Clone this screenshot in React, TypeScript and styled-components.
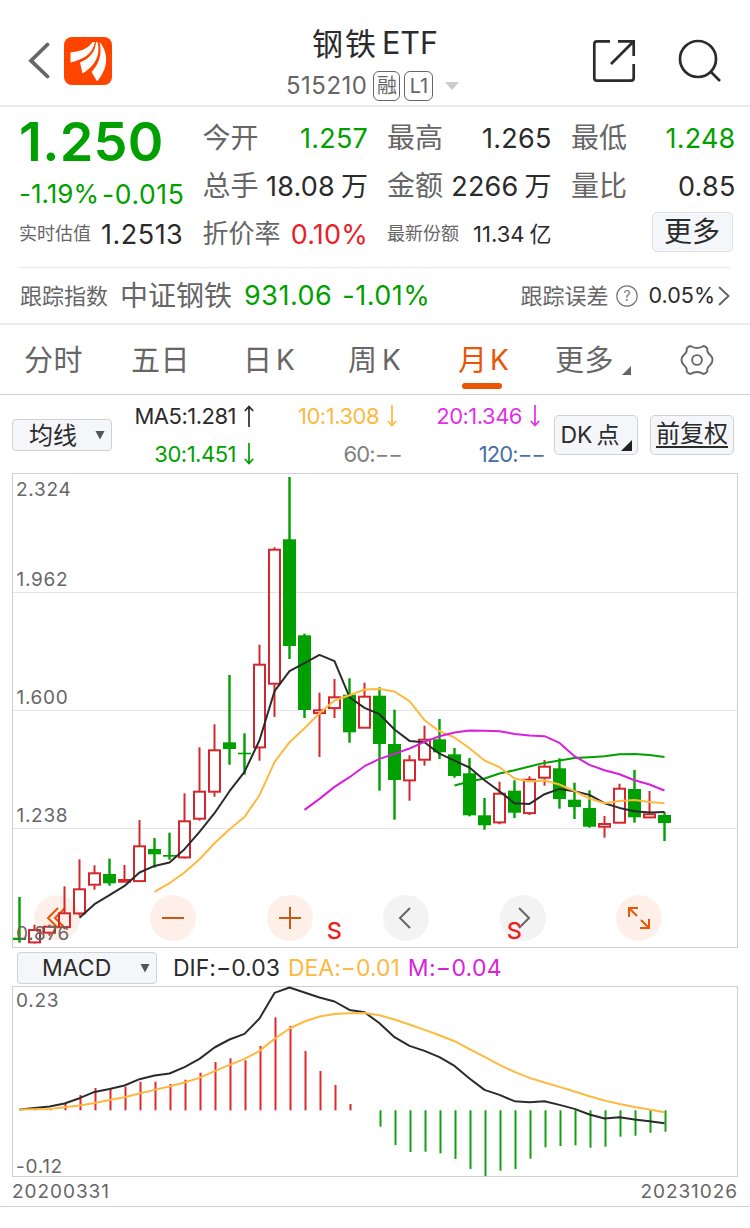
import React from "react";
import styled, { createGlobalStyle } from "styled-components";

const GREEN = "#00a000";
const RED = "#e8202a";
const INK = "#2b2b2b";
const GRAY = "#666";
const GOLD = "#fdb940";
const MAGENTA = "#d81fdc";
const ORANGE = "#ea5504";

const Global = createGlobalStyle`
  * { box-sizing: border-box; }
  body { margin: 0; background: #fff; }
  svg { display: block; flex: none; }
`;

const Page = styled.div`
  width: 750px;
  height: 1228px;
  background: #fff;
  overflow: hidden;
  font-family: Inter, "Noto Sans CJK SC", sans-serif;
  font-feature-settings: "calt" 0;
  font-weight: 400;
  color: ${INK};
`;

interface TextProps { $size: number; $color?: string; $ls?: number; $ml?: number; $weight?: number }
const Text = styled.span<TextProps>`
  display: inline-block;
  flex: none;
  white-space: pre;
  line-height: 1;
  font-size: ${(p) => p.$size}px;
  color: ${(p) => p.$color ?? INK};
  letter-spacing: ${(p) => p.$ls ?? 0}px;
  margin-left: ${(p) => p.$ml ?? 0}px;
  font-weight: ${(p) => p.$weight ?? 400};
`;

const Header = styled.header`
  display: flex;
  height: 107px;
  border-bottom: 2px solid #ebebeb;
  padding: 24px 27px 0 28px;
`;
const HeaderSide = styled.div<{ $w: number; $end?: boolean }>`
  display: flex;
  width: ${(p) => p.$w}px;
  height: 74px;
  align-items: center;
  gap: ${(p) => (p.$end ? 40 : 14)}px;
  justify-content: ${(p) => (p.$end ? "flex-end" : "flex-start")};
`;
const TitleBlock = styled.div`
  flex: 1;
`;
const TitleRow = styled.div`
  display: flex;
  height: 39px;
  align-items: center;
  padding-left: 106px;
`;
const CodeRow = styled.div`
  display: flex;
  height: 46px;
  align-items: center;
  padding-left: 80px;
`;
const Badge = styled.span<{ $ml: number; $w: number }>`
  display: flex;
  align-items: center;
  justify-content: center;
  flex: none;
  width: ${(p) => p.$w}px;
  height: 30px;
  margin-left: ${(p) => p.$ml}px;
  border: 1px solid ${GRAY};
  border-radius: 6px;
  line-height: 1;
  color: ${GRAY};
  font-size: 20px;
`;

const Quote = styled.section`
  display: flex;
  height: 161px;
  padding: 7px 14px 0 19px;
`;
const PriceColumn = styled.div`
  width: 183.5px;
`;
const PriceRow = styled.div<{ $h: number }>`
  display: flex;
  align-items: center;
  height: ${(p) => p.$h}px;
`;
const StatColumn = styled.div<{ $w: number; $gap: number }>`
  width: ${(p) => p.$w}px;
  margin-right: ${(p) => p.$gap}px;
`;
const StatRow = styled.div`
  display: flex;
  align-items: center;
  justify-content: space-between;
  height: 48px;
`;
const Pair = styled.span`
  display: flex;
  align-items: center;
`;
const MoreButton = styled.button`
  display: flex;
  align-items: center;
  justify-content: center;
  width: 81px;
  height: 40px;
  margin: -4px 3px 0 auto;
  padding: 0;
  border: 1.5px solid #dfe1e5;
  border-radius: 5px;
  background: #f5f6fa;
  font-family: inherit;
`;

const Tracking = styled.section`
  display: flex;
  align-items: center;
  height: 56px;
  margin: -1px 20px 0;
  border-top: 1px solid #e8e8e8;
`;
const Spacer = styled.span`
  flex: 1;
`;

const Tabs = styled.nav`
  display: flex;
  height: 72px;
  border-top: 2px solid #ebebeb;
  border-bottom: 1px solid #d0d0d0;
  padding: 0 0 0 24px;
`;
const Tab = styled.div<{ $w: number }>`
  width: ${(p) => p.$w}px;
  display: flex;
  flex-direction: column;
  padding-top: 19px;
`;
const TabLine = styled.span`
  display: flex;
  align-items: center;
  height: 32px;
`;
const Underline = styled.span`
  width: 40px;
  height: 6px;
  border-radius: 3px;
  margin: 7px 0 0 4px;
  background: ${ORANGE};
`;
const CornerMark = styled.svg<{ $ml: number; $mt: number }>`
  margin-left: ${(p) => p.$ml}px;
  margin-top: ${(p) => p.$mt}px;
`;

const Averages = styled.section`
  display: flex;
  height: 78px;
  padding: 0 16px 0 12px;
`;
const SelectBox = styled.div<{ $w: number; $pad: number }>`
  display: flex;
  align-items: center;
  justify-content: space-between;
  flex: none;
  width: ${(p) => p.$w}px;
  height: 32px;
  padding: 0 6px 0 ${(p) => p.$pad}px;
  border: 1px solid #cfd1d4;
  border-radius: 4px;
  background: #f5f6f9;
`;
const AverageSelect = styled(SelectBox)`
  margin-top: 24px;
  padding-top: 1px;
`;
const AverageGrid = styled.div`
  display: grid;
  grid-template-columns: 147px 143px 143px;
  grid-template-rows: 38px 38px;
  width: 433px;
  align-items: center;
  justify-items: end;
  padding-top: 2px;
`;
const AverageCell = styled.span`
  display: flex;
  align-items: center;
`;
const ArrowIcon = styled.svg`
  margin: 0 5px 0 8px;
`;
const ChipButton = styled.div<{ $ml: number }>`
  display: flex;
  align-items: center;
  justify-content: center;
  flex: none;
  width: 84px;
  height: 40px;
  margin: 20px 0 0 ${(p) => p.$ml}px;
  border: 1px solid #cfd1d4;
  border-radius: 5px;
  background: #f5f6f9;
`;
const Underlined = styled.span`
  border-bottom: 2px solid ${INK};
  height: 26px;
  display: flex;
  align-items: flex-end;
`;

const ChartBox = styled.div<{ $h: number }>`
  position: relative;
  width: 726px;
  height: ${(p) => p.$h}px;
  margin-left: 12px;
  border: 1px solid #d0d0d0;
`;
const Plot = styled.svg`
  position: absolute;
  left: -1px;
  top: -1px;
`;
const ChartNav = styled.div`
  position: absolute;
  left: 21px;
  right: 75px;
  bottom: 6px;
  display: flex;
  justify-content: space-between;
`;
const RoundButton = styled.span<{ $muted?: boolean }>`
  display: flex;
  width: 46px;
  height: 46px;
  border-radius: 50%;
  background: ${(p) => (p.$muted ? "#f3f3f3" : "#fef0e9")};
`;
const IndicatorBar = styled.div`
  display: flex;
  align-items: center;
  height: 38px;
  padding: 2px 0 0 17px;
`;
const Dates = styled.div`
  display: flex;
  justify-content: space-between;
  align-items: center;
  height: 30px;
  padding: 0 12px 1px;
  border-bottom: 1px solid #d0d0d0;
`;

/* [direction, high, body top, body bottom, low] in chart pixels */
type Candle = [0 | 1, number, number, number, number];
const candles: Candle[] = [
  [0, 897, 937.7, 940, 942.7], [1, 924.7, 929, 943, 943.5], [1, 924.7, 925.7, 933.3, 935.7], [1, 886.3, 912.3, 927.7, 929.3],
  [1, 859.3, 888.3, 914, 915.7], [1, 865.3, 872.3, 885.3, 889.7], [0, 858.7, 874, 883.3, 885.7], [1, 865, 879, 882.3, 882.3],
  [1, 820, 845.3, 881.7, 881.7], [0, 838, 849, 854.3, 867.7], [0, 832.7, 855, 856.7, 859.7], [1, 793.3, 820.3, 858, 858.5],
  [1, 747.3, 790.7, 819.3, 820.7], [1, 724.3, 749.3, 792.3, 796.7], [0, 675, 742.3, 749, 764.7], [0, 733.3, 752.7, 754.3, 774.7],
  [1, 644.7, 663.7, 748, 760.7], [1, 547.3, 548.7, 684.3, 717], [0, 477, 539.3, 646, 659], [0, 633.7, 635.3, 710, 718],
  [1, 692.7, 709.3, 713.7, 757], [1, 679, 696.3, 708.7, 718], [0, 678.3, 694.7, 732.3, 742.7], [1, 682.7, 695.7, 728.3, 728.3],
  [0, 687.3, 695.7, 744, 790.7], [0, 709.7, 744, 780, 819.7], [1, 755.3, 759.3, 781, 800.7], [1, 725.7, 738.7, 760.3, 765.7],
  [0, 719, 739.3, 752.3, 759], [0, 748, 754.3, 776, 777.7], [0, 758, 773.3, 815.3, 816.3], [0, 798, 815.3, 825.3, 829.7],
  [1, 781.7, 792.7, 823, 824.3], [0, 780.3, 790.7, 812.7, 818], [1, 776.3, 778.7, 813.7, 815], [1, 760, 765.7, 778.3, 785.7],
  [0, 758.3, 768.3, 799, 808.7], [0, 782.7, 799.7, 807, 819], [0, 790.3, 808, 826.7, 827.7], [1, 816, 823, 827.3, 837.7],
  [1, 783.7, 787.7, 823.3, 823.3], [0, 770, 789, 817.3, 822.7], [1, 791, 813.3, 818, 818], [0, 812, 815, 823, 841],
];
const ma5 = [917.5, 904, 895, 885.7, 872.3, 865.7, 862.3, 849, 831.7, 813, 791, 771.7, 740, 691, 671, 663, 654.7, 661, 697, 707.7, 714, 729.3, 740.7, 742, 753.5, 760.5, 767.3, 780, 791, 803, 803.7, 794, 788.7, 791, 794.7, 803, 807.7, 811, 812.3, 811.7];
const ma10 = [891.7, 883, 872.3, 859, 843, 829, 816.7, 795, 762, 742, 728, 713, 700.3, 695, 689.3, 688.7, 691.3, 701, 720, 731, 737.3, 748, 760.3, 767, 778.3, 781.3, 780.3, 784.3, 791, 798.3, 803, 800.7, 799.7, 801.7, 803];
const ma20 = [809.7, 798.7, 786.7, 777, 766, 758.7, 753.7, 748.3, 741.7, 736, 732.3, 730.3, 730.5, 731, 733.7, 735.3, 736, 742.7, 756, 764.7, 770, 774, 780, 784.3, 790.3];
const ma30 = [785.3, 781.3, 778.3, 773.3, 770, 766.3, 762.7, 760.3, 757.7, 757, 756, 754, 753.7, 754.7, 756.7];
const bars: (number | null)[] = [null, 1109, 1108.5, 1103.7, 1095, 1088, 1088, 1086.7, 1081.7, 1081.7, 1084, 1079.7, 1072.7, 1062, 1058.3, 1060.3, 1046, 1017.3, 1026, 1051, 1071, 1085, 1104, null, 1126.7, 1145, 1152, 1151.7, 1153.3, 1159, 1169, 1176, 1170.7, 1169, 1158.7, 1147.3, 1146, 1145.3, 1147.7, 1146.7, 1136.7, 1135.7, 1132.7, 1131.7];
const dif = [1109.3, 1107.7, 1106.3, 1103.3, 1098, 1091.7, 1088.7, 1085.3, 1079, 1075.3, 1073.3, 1067, 1058.7, 1047.3, 1039.3, 1033.7, 1018.3, 992.7, 987.3, 992.3, 997.3, 1001.3, 1009.7, 1012, 1023, 1037, 1045.7, 1050.7, 1057, 1065.7, 1078.3, 1089.7, 1094.7, 1101, 1102, 1101, 1104.7, 1108.7, 1114.3, 1118.3, 1117, 1119.3, 1121, 1123];
const dea = [1109.3, 1109, 1108.7, 1107, 1105.3, 1102.7, 1099.7, 1097, 1093.3, 1089.7, 1086.3, 1082.3, 1077.7, 1071, 1064.7, 1058.7, 1050.7, 1038.7, 1028.3, 1021.3, 1016.3, 1013.7, 1013, 1012.7, 1015, 1019.3, 1024.3, 1029.7, 1035, 1041, 1049, 1056.7, 1064.7, 1071.7, 1077.7, 1082.3, 1086.7, 1091.3, 1096, 1100.3, 1103.7, 1106.7, 1109.3, 1112];

const cx = (i: number) => 19.5 + 15 * i;

function Line({ data, start = 0, color }: { data: number[]; start?: number; color: string }) {
  return <polyline fill="none" stroke={color} strokeWidth={2} strokeLinejoin="round" points={data.map((y, i) => `${cx(i + start)},${y + 0.2}`).join(" ")} />;
}

function CandleMark({ c, x }: { c: Candle; x: number }) {
  const [up, high, top, bottom, low] = c;
  if (!up) {
    return (
      <g fill={GREEN}>
        <rect x={x - 1.2} y={high} width={2.4} height={low - high} />
        <rect x={x - 6.5} y={top} width={13} height={bottom - top} />
      </g>
    );
  }
  return (
    <g stroke="#d2282d" strokeWidth={2} fill="none">
      <line x1={x} x2={x} y1={high} y2={top + 1} />
      <line x1={x} x2={x} y1={bottom} y2={Math.max(low, bottom)} />
      <rect x={x - 5.5} y={top + 1} width={11} height={Math.max(1.5, bottom - top - 1.6)} />
    </g>
  );
}

const AxisText = styled.text`
  font-family: Inter, sans-serif;
  font-size: 19px;
  letter-spacing: 0.7px;
  fill: ${GRAY};
`;
const SignalText = styled.text`
  font-family: Inter, sans-serif;
  font-size: 23.5px;
  font-weight: 500;
  fill: #f0201c;
`;

function PricePlot() {
  return (
    <Plot width={726} height={475} viewBox="12 473 726 475">
      {[592.5, 710.5, 828.5].map((y) => <line key={y} x1={13} x2={737} y1={y} y2={y} stroke="#e4e5ec" />)}
      {candles.map((c, i) => <CandleMark key={i} c={c} x={cx(i)} />)}
      <Line data={ma30} start={29} color={GREEN} />
      <Line data={ma5} start={4} color={INK} />
      <Line data={ma10} start={9} color={GOLD} />
      <Line data={ma20} start={19} color={MAGENTA} />
      <AxisText x={16} y={496}>2.324</AxisText>
      <AxisText x={16.5} y={586}>1.962</AxisText>
      <AxisText x={16.5} y={704}>1.600</AxisText>
      <AxisText x={16.5} y={822}>1.238</AxisText>
      <AxisText x={16} y={940}>0.876</AxisText>
      <SignalText x={326.8} y={939}>S</SignalText>
      <SignalText x={506.8} y={939}>S</SignalText>
    </Plot>
  );
}

function MacdPlot() {
  return (
    <Plot width={726} height={191} viewBox="12 986 726 191">
      {bars.map((y, i) => y === null ? null : (
        <rect key={i} x={cx(i)} width={2} y={Math.min(y, 1110.3)} height={Math.abs(y - 1110.3)} fill={y < 1110 ? "#e0282d" : "#14a014"} />
      ))}
      <Line data={dif} color={INK} />
      <Line data={dea} color={GOLD} />
      <AxisText x={16} y={1007}>0.23</AxisText>
      <AxisText x={16} y={1173}>-0.12</AxisText>
    </Plot>
  );
}

const navIcons: { muted?: boolean; color: string; d: string }[] = [
  { color: ORANGE, d: "M24 13 14 23 24 33M31 13 21 23 31 33" },
  { color: "#c65a14", d: "M12 23H34" },
  { color: "#c65a14", d: "M12 23H34M23 12V34" },
  { muted: true, color: GRAY, d: "M27 13 17 23 27 33" },
  { muted: true, color: GRAY, d: "M19 13 29 23 19 33" },
  { color: ORANGE, d: "M13 22V13H22M13 13 21 21M25 25 33 33M24 33H33V24" },
];

function Stat({ label, value, color, labelSize = 28, unit }: { label: string; value: string; color?: string; labelSize?: number; unit?: string }) {
  return (
    <StatRow>
      <Text $size={labelSize} $color={GRAY}>{label}</Text>
      <Pair>
        <Text $size={27} $color={color} $ls={0.2}>{value}</Text>
        {unit && <Text $size={27} $ml={6}>{unit}</Text>}
      </Pair>
    </StatRow>
  );
}

function Caret() {
  return <svg width="10" height="9" viewBox="0 0 10 9"><path d="M.5 0H9.500L5 8.500Z" fill="#555" /></svg>;
}

function Average({ label, color, up }: { label: string; color: string; up?: boolean }) {
  return (
    <AverageCell>
      <Text $size={22} $ls={-0.5} $weight={370} $color={color}>{label}</Text>
      <ArrowIcon width="10" height="22" viewBox="0 0 10 22" fill="none" stroke={color} strokeWidth="1.7">
        <path d={up ? "M5 22V1.500M.8 6 5 1.500 9.200 6" : "M5 0V20.500M.8 16 5 20.500 9.200 16"} />
      </ArrowIcon>
    </AverageCell>
  );
}

const HelpIcon = styled.svg`
  margin-left: 7px;
`;
const Chevron = styled.svg`
  margin-left: 3px;
`;
const CodeCaret = styled.svg`
  margin-left: 12px;
`;

export default function App() {
  return (
    <Page>
      <Global />
      <Header>
        <HeaderSide $w={178}>
          <svg width="22" height="38" viewBox="28 42 22 38"><path d="M47.5 44.5 31 60.7 47.5 76.5" fill="none" stroke="#666" strokeWidth="3.8" strokeLinecap="round" /></svg>
          <svg width="48" height="48" viewBox="0 0 48 48">
            <rect width="48" height="48" rx="8" fill="#ff4400" />
            <path fill="#fff" d="M28.500 5C23 13 15 14.500 6.500 15.500V25.500C19 22.500 28 18 31 5ZM32 5C31.500 14 26 21.500 16 25.500L18.500 36.500C31 29 37 18 33.500 5ZM35.500 5C38.500 17 35 27 27.500 35L33 44.300C42 35 47 18 35.500 5Z" />
          </svg>
        </HeaderSide>
        <TitleBlock>
          <TitleRow>
            <Text $size={31} $ls={2}>钢铁</Text>
            <Text $size={30.5} $ml={4}>ETF</Text>
          </TitleRow>
          <CodeRow>
            <Text $size={24} $color={GRAY} $ls={0.5}>515210</Text>
            <Badge $ml={6} $w={27}>融</Badge>
            <Badge $ml={4} $w={29}>L1</Badge>
            <CodeCaret width="14" height="8" viewBox="0 0 14 8"><path d="M0 0H14L7 8Z" fill="#ccc" /></CodeCaret>
          </CodeRow>
        </TitleBlock>
        <HeaderSide $w={131} $end>
          <svg width="46" height="46" viewBox="590 38 46 46" fill="none" stroke="#2b2b2b" strokeWidth="2.7">
            <path d="M609 41.300H596Q593.300 41.300 593.300 44V78Q593.300 80.700 596 80.700H630Q632.700 80.700 632.700 78V64M617 41.300H632.700V56M632 42 610 64" />
          </svg>
          <svg width="46" height="46" viewBox="676 38 46 46" fill="none" stroke="#2b2b2b" strokeWidth="2.700">
            <circle cx="697" cy="59" r="18" /><path d="M709.500 71.500 719 81" />
          </svg>
        </HeaderSide>
      </Header>

      <Quote>
        <PriceColumn>
          <PriceRow $h={56}><Text $size={54} $color={GREEN} $weight={600} $ls={0.3}>1.250</Text></PriceRow>
          <PriceRow $h={48}>
            <Text $size={26} $color={GREEN}>-1.19%</Text>
            <Text $size={26.5} $ls={0.6} $color={GREEN} $ml={3}>-0.015</Text>
          </PriceRow>
          <PriceRow $h={32}>
            <Text $size={18} $color={GRAY}>实时估值</Text>
            <Text $size={27} $ls={0.5} $ml={10}>1.2513</Text>
          </PriceRow>
        </PriceColumn>
        <StatColumn $w={165.5} $gap={19}>
          <Stat label="今开" value="1.257" color={GREEN} />
          <Stat label="总手" value="18.08" unit="万" />
          <Stat label="折价率" value="0.10%" color={RED} labelSize={26} />
        </StatColumn>
        <StatColumn $w={164.5} $gap={19.5}>
          <Stat label="最高" value="1.265" />
          <Stat label="金额" value="2266" unit="万" />
          <StatRow>
            <Text $size={18} $color={GRAY}>最新份额</Text>
            <Pair><Text $size={22}>11.34</Text><Text $size={22} $ml={5}>亿</Text></Pair>
          </StatRow>
        </StatColumn>
        <StatColumn $w={164.5} $gap={0}>
          <Stat label="最低" value="1.248" color={GREEN} />
          <Stat label="量比" value="0.85" />
          <StatRow><MoreButton><Text $size={28}>更多</Text></MoreButton></StatRow>
        </StatColumn>
      </Quote>

      <Tracking>
        <Text $size={22} $color={GRAY}>跟踪指数</Text>
        <Text $size={28} $color={GRAY} $ml={12}>中证钢铁</Text>
        <Text $size={27} $color={GREEN} $ls={0.5} $ml={12}>931.06</Text>
        <Text $size={27} $color={GREEN} $ls={0.5} $ml={10}>-1.01%</Text>
        <Spacer />
        <Text $size={22} $color={GRAY}>跟踪误差</Text>
        <HelpIcon width="22" height="22" viewBox="0 0 22 22">
          <circle cx="11" cy="11" r="10.200" fill="none" stroke="#777" strokeWidth="1.200" />
          <text x="11" y="16" fontSize="14" textAnchor="middle" fill="#777" fontFamily="Inter">?</text>
        </HelpIcon>
        <Text $size={21.5} $ml={11}>0.05%</Text>
        <Chevron width="12" height="20" viewBox="0 0 12 20"><path d="M1 1 10.500 10 1 19" fill="none" stroke="#666" strokeWidth="2" /></Chevron>
      </Tracking>

      <Tabs>
        <Tab $w={107}><TabLine><Text $size={29} $ls={0.5} $color={GRAY}>分时</Text></TabLine></Tab>
        <Tab $w={112}><TabLine><Text $size={29} $ls={0.5} $color={GRAY}>五日</Text></TabLine></Tab>
        <Tab $w={105}><TabLine><Text $size={29} $color={GRAY}>日</Text><Text $size={28} $color={GRAY} $ml={4}>K</Text></TabLine></Tab>
        <Tab $w={110}><TabLine><Text $size={29} $color={GRAY}>周</Text><Text $size={28} $color={GRAY} $ml={5}>K</Text></TabLine></Tab>
        <Tab $w={97}>
          <TabLine><Text $size={29} $color={ORANGE}>月</Text><Text $size={28} $color={ORANGE} $ml={3}>K</Text></TabLine>
          <Underline />
        </Tab>
        <Tab $w={125}>
          <TabLine>
            <Text $size={29} $ls={0.5} $color={GRAY}>更多</Text>
            <CornerMark $ml={8} $mt={20} width="9" height="9" viewBox="0 0 9 9"><path d="M9 0V9H0Z" fill="#666" /></CornerMark>
          </TabLine>
        </Tab>
        <Tab $w={40}>
          <TabLine>
            <svg width="34" height="32" viewBox="680 343 34 32" fill="none" stroke="#666" strokeWidth="1.9">
              <path strokeLinejoin="round" d="M690.500 345Q693.500 347 697 347Q700.500 347 703.500 345Q706 345.500 707.300 347.500Q706.800 351.500 710 353.800Q712.500 356 712.500 359Q712.500 362 710 364.200Q706.800 366.500 707.300 370.500Q706 372.500 703.500 373Q700.500 371 697 371Q693.500 371 690.500 373Q688 372.500 686.700 370.500Q687.200 366.500 684 364.200Q681.500 362 681.500 359Q681.500 356 684 353.800Q687.200 351.500 686.700 347.500Q688 345.500 690.500 345Z" />
              <circle cx="697" cy="359" r="4.900" />
            </svg>
          </TabLine>
        </Tab>
      </Tabs>

      <Averages>
        <AverageSelect $w={100} $pad={16}><Text $size={24}>均线</Text><Caret /></AverageSelect>
        <AverageGrid>
          <Average label="MA5:1.281" color={INK} up />
          <Average label="10:1.308" color={GOLD} />
          <Average label="20:1.346" color="#e030e8" />
          <Average label="30:1.451" color={GREEN} />
          <Text $size={22} $ls={-0.9} $weight={370} $color="#808080">60:−−</Text>
          <Text $size={22} $ls={-0.9} $weight={370} $color="#4a6ea8">120:−−</Text>
        </AverageGrid>
        <ChipButton $ml={9}>
          <Text $size={23}>DK</Text><Text $size={23} $ml={4}>点</Text>
          <CornerMark $ml={1} $mt={20} width="11" height="11" viewBox="0 0 12 12"><path d="M12 0V12H0Z" fill="#222" /></CornerMark>
        </ChipButton>
        <ChipButton $ml={12}><Underlined><Text $size={24}>前复权</Text></Underlined></ChipButton>
      </Averages>

      <ChartBox $h={475}>
        <ChartNav>
          {navIcons.map((n, i) => (
            <RoundButton key={i} $muted={n.muted}>
              <svg width="46" height="46" viewBox="0 0 46 46"><path d={n.d} fill="none" stroke={n.color} strokeWidth="2" /></svg>
            </RoundButton>
          ))}
        </ChartNav>
        <PricePlot />
      </ChartBox>

      <IndicatorBar>
        <SelectBox $w={140} $pad={24}><Text $size={23}>MACD</Text><Caret /></SelectBox>
        <Text $size={23} $ml={16} $weight={370}>DIF:−0.03</Text>
        <Text $size={23} $ml={8} $weight={370} $color={GOLD}>DEA:−0.01</Text>
        <Text $size={23} $ml={8} $ls={0.3} $weight={370} $color={MAGENTA}>M:−0.04</Text>
      </IndicatorBar>

      <ChartBox $h={191}><MacdPlot /></ChartBox>

      <Dates>
        <Text $size={19} $color={GRAY} $ls={0.95}>20200331</Text>
        <Text $size={19} $color={GRAY} $ls={0.95}>20231026</Text>
      </Dates>
    </Page>
  );
}
